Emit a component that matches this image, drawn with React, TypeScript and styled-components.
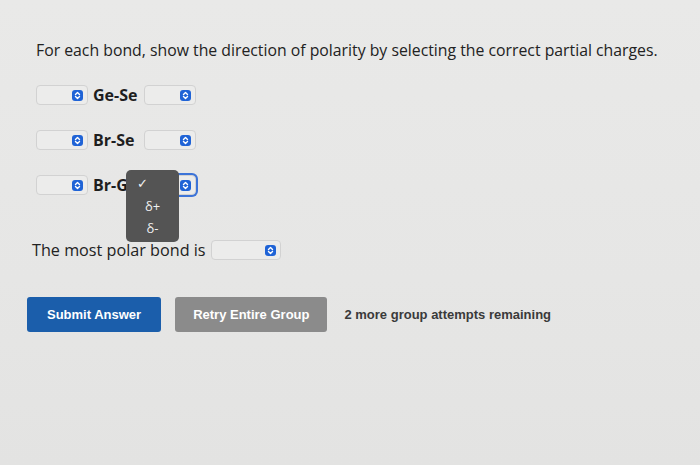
import styled, { createGlobalStyle } from "styled-components";

const GlobalStyle = createGlobalStyle`
  html, body {
    margin: 0;
    padding: 0;
    background: #e7e7e6;
  }
`;

const Page = styled.div`
  width: 700px;
  height: 465px;
  box-sizing: border-box;
  padding: 39px 0 0 36px;
  font-family: "Open Sans", "Liberation Sans", sans-serif;
  color: #222;
  background: linear-gradient(180deg, #e9e9e8 0%, #e6e6e5 60%, #e3e3e2 100%);
`;

const Prompt = styled.p`
  margin: 0 0 24px;
  font-size: 15.8px;
  line-height: 22px;
`;

const BondList = styled.div`
  display: flex;
  flex-direction: column;
  gap: 25px;
`;

const BondRow = styled.div`
  display: flex;
  align-items: center;
  gap: 5px;
  height: 20px;
  position: relative;
`;

const Select = styled.div<{ $w?: number; $focus?: boolean }>`
  position: relative;
  width: ${(p) => p.$w ?? 52}px;
  height: 20px;
  box-sizing: border-box;
  border: 1px solid #d2d2d2;
  border-radius: 4px;
  background: #ececeb;
  display: flex;
  align-items: center;
  justify-content: flex-end;
  padding-right: 4px;
  box-shadow: ${(p) => (p.$focus ? "0 0 0 2px #3d74d8" : "none")};
`;

const Stepper = styled.span`
  width: 11px;
  height: 11px;
  border-radius: 3px;
  background: #1f63d6;
  display: flex;
  align-items: center;
  justify-content: center;
`;

const BondLabel = styled.span`
  font-size: 16px;
  font-weight: 700;
  color: #1e1e1e;
  min-width: 46px;
`;

const Menu = styled.div`
  position: absolute;
  left: 90px;
  top: -5px;
  width: 53px;
  height: 72px;
  border-radius: 5px;
  background: #545454;
  color: #f2f2f2;
  display: flex;
  flex-direction: column;
  align-items: center;
  padding-top: 2px;
  box-sizing: border-box;
  font-size: 13px;
  z-index: 2;
`;

const MenuItem = styled.div`
  height: 22.5px;
  display: flex;
  align-items: center;
  justify-content: center;
`;

const Check = styled(MenuItem)`
  align-self: flex-start;
  padding-left: 11px;
  font-size: 13px;
`;

const PolarLine = styled.div`
  display: flex;
  align-items: center;
  gap: 5px;
  margin: 44px 0 0 -4px;
  font-size: 16.2px;
`;

const Actions = styled.div`
  display: flex;
  align-items: center;
  margin: 36px 0 0 -9px;
  font-family: "Liberation Sans", Arial, sans-serif;
  font-weight: 700;
  font-size: 13px;
`;

const Button = styled.button<{ $primary?: boolean }>`
  height: 35px;
  padding: 0 ${(p) => (p.$primary ? 20 : 18)}px;
  border: none;
  border-radius: 3px;
  font: inherit;
  color: #fff;
  background: ${(p) => (p.$primary ? "#1b5eab" : "#8b8b8b")};
  margin-right: ${(p) => (p.$primary ? 14 : 17)}px;
`;

const Remaining = styled.span`
  color: #3a3a3a;
`;

function StepIcon() {
  return (
    <Stepper>
      <svg width="7" height="9" viewBox="0 0 7 9" fill="none" stroke="#fff" strokeWidth="1.4" strokeLinecap="round" strokeLinejoin="round">
        <path d="M1.5 3.4 3.5 1.5 5.5 3.4" />
        <path d="M1.5 5.6 3.5 7.5 5.5 5.6" />
      </svg>
    </Stepper>
  );
}

function Dropdown({ w, focus }: { w?: number; focus?: boolean }) {
  return (
    <Select $w={w} $focus={focus}>
      <StepIcon />
    </Select>
  );
}

const bonds = ["Ge-Se", "Br-Se", "Br-Ge"];

export default function App() {
  return (
    <Page>
      <GlobalStyle />
      <Prompt>
        For each bond, show the direction of polarity by selecting the correct partial charges.
      </Prompt>
      <BondList>
        {bonds.map((b, i) => (
          <BondRow key={b}>
            <Dropdown />
            <BondLabel>{b}</BondLabel>
            <Dropdown focus={i === 2} />
            {i === 2 && (
              <Menu>
                <Check>✓</Check>
                <MenuItem>δ+</MenuItem>
                <MenuItem>δ-</MenuItem>
              </Menu>
            )}
          </BondRow>
        ))}
      </BondList>
      <PolarLine>
        The most polar bond is
        <Dropdown w={70} />
      </PolarLine>
      <Actions>
        <Button $primary>Submit Answer</Button>
        <Button>Retry Entire Group</Button>
        <Remaining>2 more group attempts remaining</Remaining>
      </Actions>
    </Page>
  );
}
